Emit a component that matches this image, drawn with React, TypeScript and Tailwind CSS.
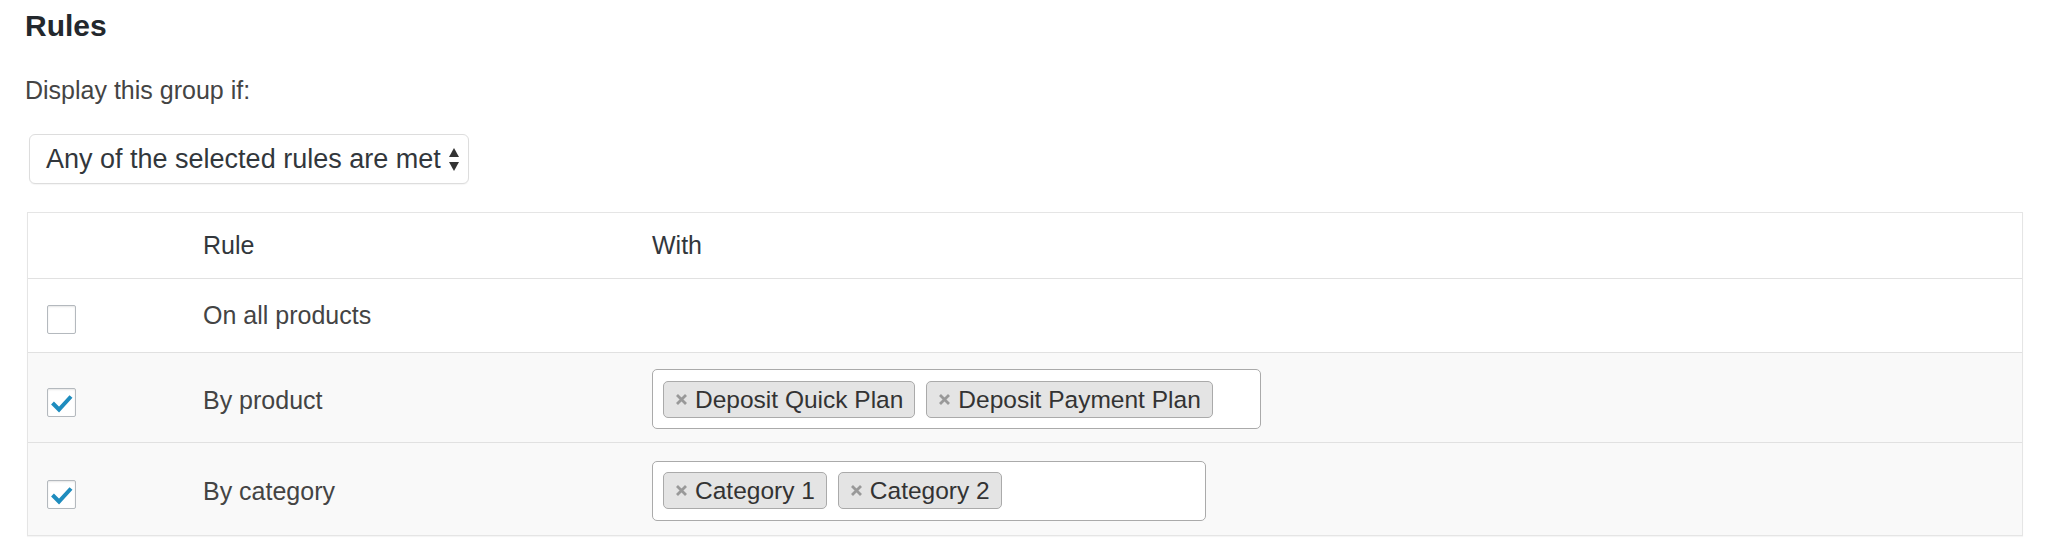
import React from "react";

function Check({ checked }: { checked: boolean }) {
  return (
    <div className="mt-[7px] w-[29px] h-[29px] border border-[#b4b9be] bg-white rounded-[2px] shadow-[inset_0_1px_2px_rgba(0,0,0,0.1)] relative">
      {checked && (
        <svg width="29" height="29" viewBox="0 0 29 29" className="absolute -left-px -top-px">
          <polyline
            points="5.5,15 12,21.5 24,8.5"
            fill="none"
            stroke="#1e8cbe"
            strokeWidth="4"
            strokeLinecap="butt"
            strokeLinejoin="miter"
          />
        </svg>
      )}
    </div>
  );
}

function Tag({ label }: { label: string }) {
  return (
    <div className="h-[37px] flex items-center border border-[#aaa] bg-[#e4e4e4] rounded-[5px] pl-[12px] pr-[11px] gap-[8px] text-[#333]">
      <svg width="11" height="11" viewBox="0 0 11 11">
        <path d="M1 1 L10 10 M10 1 L1 10" stroke="#999" strokeWidth="2.8" strokeLinecap="butt" />
      </svg>
      <span className="text-[24.5px] leading-[25px]">{label}</span>
    </div>
  );
}

function TagBox({ tags, width }: { tags: string[]; width: string }) {
  return (
    <div className={`h-[60px] border border-[#aaa] rounded-[5px] bg-white flex items-center pl-[10px] gap-[11px] ${width}`}>
      {tags.map((t) => (
        <Tag key={t} label={t} />
      ))}
    </div>
  );
}

export default function App() {
  return (
    <div className="w-[2048px] h-[552px] bg-white font-['Liberation_Sans',Arial,sans-serif] text-[#444] pl-[25px] pt-[11px]">
      <h2 className="text-[30px] leading-[30px] font-bold text-[#23282d]">Rules</h2>
      <p className="mt-[37px] text-[25px] leading-[25px] text-[#444]">Display this group if:</p>
      <div className="mt-[31px] ml-[4px] w-[440px] h-[50px] border border-[#ddd] rounded-[6px] bg-white shadow-[0_1px_1px_rgba(0,0,0,0.04)] flex items-center justify-between pl-[16px] pr-[9px] text-[#32373c]">
        <span className="text-[27px] leading-[27px]">Any of the selected rules are met</span>
        <svg width="10" height="23" viewBox="0 0 10 23">
          <path d="M5 0 L10 9 L0 9 Z" fill="#333" />
          <path d="M0 14 L10 14 L5 23 Z" fill="#333" />
        </svg>
      </div>
      <div className="mt-[28px] ml-[2px] w-[1996px] border border-[#e5e5e5] shadow-[0_1px_1px_rgba(0,0,0,0.04)] text-[25px] leading-[25px]">
        <div className="grid grid-cols-[175px_449px_1fr] h-[66px] items-center bg-white border-b border-[#e1e1e1] text-[#32373c]">
          <div></div>
          <div>Rule</div>
          <div>With</div>
        </div>
        <div className="grid grid-cols-[175px_449px_1fr] h-[74px] items-center bg-white border-b border-[#e1e1e1]">
          <div className="pl-[19px]">
            <Check checked={false} />
          </div>
          <div>On all products</div>
          <div></div>
        </div>
        <div className="grid grid-cols-[175px_449px_1fr] h-[90px] pt-[3px] items-center bg-[#f9f9f9] border-b border-[#e1e1e1]">
          <div className="pl-[19px]">
            <Check checked={true} />
          </div>
          <div className="pt-[3px]">By product</div>
          <div>
            <TagBox tags={["Deposit Quick Plan", "Deposit Payment Plan"]} width="w-[609px]" />
          </div>
        </div>
        <div className="grid grid-cols-[175px_449px_1fr] h-[92px] pt-[3px] items-center bg-[#f9f9f9]">
          <div className="pl-[19px]">
            <Check checked={true} />
          </div>
          <div className="pt-[2px]">By category</div>
          <div>
            <TagBox tags={["Category 1", "Category 2"]} width="w-[554px]" />
          </div>
        </div>
      </div>
    </div>
  );
}
